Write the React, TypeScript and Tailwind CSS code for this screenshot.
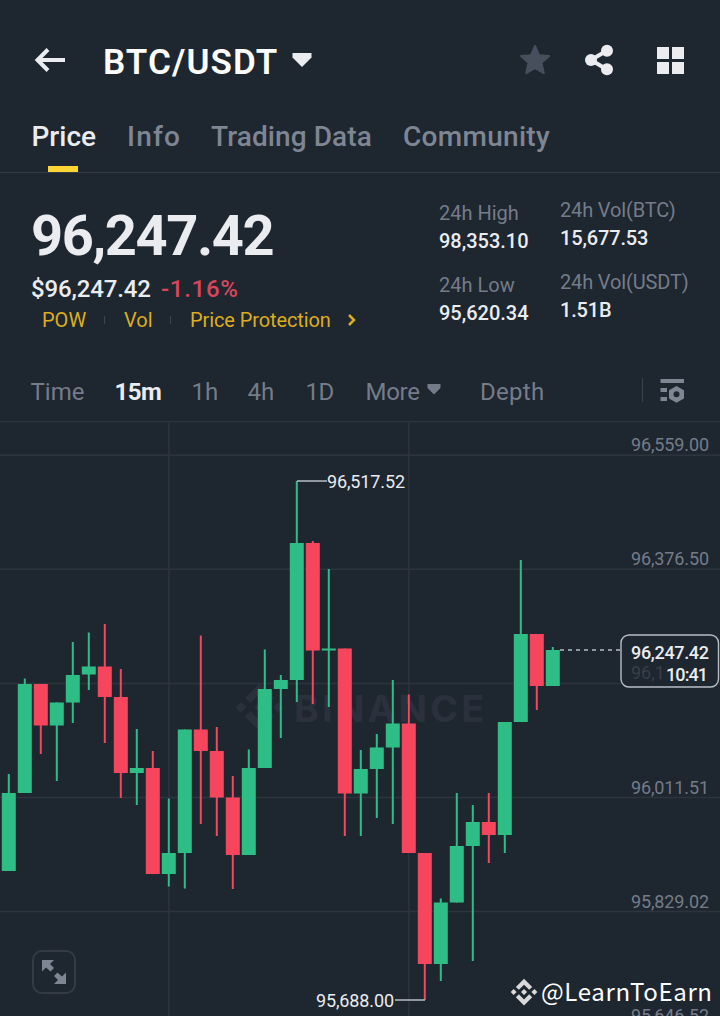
import React from 'react';

interface Candle {
  high: number;
  top: number;
  bottom: number;
  low: number;
  up: boolean;
}

// high, body top, body bottom, low, rising
const rows: [number, number, number, number, boolean][] = [
  [774, 793, 871, 871, true],
  [678.5, 684, 793, 793, true],
  [684, 684, 725.5, 754, false],
  [702.5, 702.5, 725.5, 781, true],
  [642, 675, 702.5, 723, true],
  [632.5, 666.5, 674.5, 690, true],
  [624, 666.5, 697, 743, false],
  [669, 697, 773, 798, false],
  [729, 768, 773, 805, true],
  [751, 768, 874, 874, false],
  [798.5, 853, 874, 886.5, true],
  [729.5, 729.5, 853, 888.5, true],
  [635.5, 729.5, 751, 824, false],
  [727, 751, 797.5, 836, false],
  [776, 797.5, 855, 889, false],
  [749.5, 768, 855, 855, true],
  [649.5, 689, 768, 768, true],
  [675, 680, 689, 738, true],
  [481, 543, 680, 702, true],
  [541, 543, 650.5, 704, false],
  [569, 648.5, 650.5, 707, true],
  [648.5, 648.5, 793.5, 836, false],
  [750, 769, 793.5, 836, true],
  [734, 747.5, 769, 818, true],
  [680, 723.5, 747.5, 824, true],
  [694.5, 723.5, 853, 853, false],
  [853, 853, 964, 1000, false],
  [898.5, 902.5, 964, 981, true],
  [793, 846, 902.5, 902.5, true],
  [805, 822, 846, 961, true],
  [793, 822, 835, 863, false],
  [722, 722, 835, 853, true],
  [560, 634, 722, 722, true],
  [634, 634, 686, 710, false],
  [647, 650, 686, 686, true],
];

const candles: Candle[] = rows.map(([high, top, bottom, low, up]) => ({ high, top, bottom, low, up }));

const axisLabels = [
  { y: 451, text: '96,559.00' },
  { y: 565, text: '96,376.50' },
  { y: 794, text: '96,011.51' },
  { y: 908, text: '95,829.02' },
  { y: 1022, text: '95,646.52' },
];

const tabs = [
  { label: 'Price', className: 'w-[95.5px] text-[#eaecef]' },
  { label: 'Info', className: 'w-[84px] text-[#7e8593] tracking-[1.2px]' },
  { label: 'Trading Data', className: 'w-[192px] text-[#7e8593] tracking-[0.1px]' },
  { label: 'Community', className: 'text-[#7e8593] tracking-[0.3px]' },
];

const intervals = [
  { label: 'Time', className: 'w-[84px]' },
  { label: '15m', className: 'w-[77px] font-bold tracking-[-0.5px] text-[#eaecef]' },
  { label: '1h', className: 'w-[56px]' },
  { label: '4h', className: 'w-[58px]' },
  { label: '1D', className: 'w-[60px] tracking-[-0.5px]' },
];

const stats = [
  {
    className: 'w-[121px] gap-[15px] pt-[26px]',
    items: [
      { label: '24h High', value: '98,353.10' },
      { label: '24h Low', value: '95,620.34' },
    ],
  },
  {
    className: 'gap-[15px] pt-[23px] tracking-[-0.15px]',
    items: [
      { label: '24h Vol(BTC)', value: '15,677.53' },
      { label: '24h Vol(USDT)', value: '1.51B' },
    ],
  },
];

function BinanceMark() {
  return (
    <>
      <path d="M7.6 10.1 12 5.7l4.4 4.4L19 7.6l-7-7-7 7z" />
      <path d="M.6 12l2.5-2.5L5.7 12l-2.6 2.5z" />
      <path d="M7.6 13.9 12 18.3l4.4-4.4 2.6 2.5-7 7-7-7z" />
      <path d="M18.3 12l2.6-2.5 2.5 2.5-2.5 2.5z" />
      <path d="M9.4 12 12 9.4l2.6 2.6-2.6 2.6z" />
    </>
  );
}

function Header() {
  return (
    <header className="flex h-[120px] items-center pl-[34px] pr-9">
      <svg width="32" height="26" viewBox="0 0 32 26" fill="none" stroke="#eaecef" strokeWidth="4">
        <path d="M4 13h27M14 2.5 3.5 13 14 23.5" />
      </svg>
      <h1 className="ml-[37px] w-[189px] whitespace-nowrap pt-[5px] text-[35px] font-semibold leading-none tracking-[1.1px] text-white">
        BTC/USDT
      </h1>
      <svg width="20" height="16" viewBox="0 0 20 16" fill="#eaecef">
        <path d="M.5 1h19v4.500L10 15 .5 5.500z" />
      </svg>
      <div className="ml-auto flex items-center">
        <svg width="32" height="32" viewBox="0 0 32 32" fill="#474f5c" stroke="#474f5c" strokeWidth="2" strokeLinejoin="round">
          <path d="M16 2l4.1 9.2 10 .9-7.600 6.700 2.300 10.200L16 24.200 7.200 29l2.300-10.200L2 12.100l10-.9z" />
        </svg>
        <svg width="32" height="32" viewBox="0 0 32 32" className="ml-8" fill="#eaecef" stroke="#eaecef">
          <path d="M8 16 24 6.500M8 16l16 9.500" strokeWidth="4" />
          <circle cx="8" cy="16" r="6" stroke="none" />
          <circle cx="24" cy="6.700" r="6" stroke="none" />
          <circle cx="24" cy="25.300" r="6" stroke="none" />
        </svg>
        <div className="ml-[42px] grid grid-cols-2 gap-[3px]">
          <i className="size-3 bg-[#eaecef]" />
          <i className="size-3 bg-[#eaecef]" />
          <i className="size-3 bg-[#eaecef]" />
          <i className="size-3 bg-[#eaecef]" />
        </div>
      </div>
    </header>
  );
}

function Tabs() {
  return (
    <nav className="flex h-[53px] border-b border-[#343b46] pl-[31.5px] text-[28px] font-medium leading-[33px]">
      {tabs.map((tab) => (
        <div key={tab.label} className={`flex flex-col justify-between whitespace-nowrap ${tab.className}`}>
          <span>{tab.label}</span>
          {tab.label === 'Price' && <span className="ml-4 h-1.5 w-[30px] bg-[#fcd535]" />}
        </div>
      ))}
    </nav>
  );
}

function Summary() {
  return (
    <section className="flex h-[189px] pl-[31px]">
      <div className="w-[408px] pt-[33px]">
        <div className="text-[56px] font-bold leading-[60px] tracking-[-1.4px] text-[#eaecef]">96,247.42</div>
        <div className="mt-2 flex text-2xl leading-[30px]">
          <span className="w-[130px] font-medium tracking-[-0.15px] text-[#eaecef]">$96,247.42</span>
          <span className="font-medium tracking-[0.7px] text-[#d4475c]">-1.16%</span>
        </div>
        <div className="ml-[11px] mt-1 flex items-center whitespace-nowrap text-[20px] leading-6 text-[#dcae1e]">
          <span className="w-[62px]">POW</span>
          <i className="h-2 w-px bg-[#3b424e]" />
          <span className="ml-[19px] w-[46px]">Vol</span>
          <i className="h-2 w-px bg-[#3b424e]" />
          <span className="ml-[19px] w-[157px] tracking-[-0.1px]">Price Protection</span>
          <svg width="10" height="12" viewBox="0 0 10 12" fill="none" stroke="#dcae1e" strokeWidth="2.500">
            <path d="M2 1l5 5-5 5" />
          </svg>
        </div>
      </div>
      {stats.map((column, i) => (
        <div key={i} className={`flex flex-col whitespace-nowrap text-[20px] ${column.className}`}>
          {column.items.map((item) => (
            <div key={item.label}>
              <div className="leading-7 text-[#757c89]">{item.label}</div>
              <div className="leading-[29px] font-medium text-[#eaecef]">{item.value}</div>
            </div>
          ))}
        </div>
      ))}
    </section>
  );
}

function Intervals() {
  return (
    <div className="flex h-[59px] items-center pl-[30.5px] text-2xl text-[#757c89]">
      {intervals.map((item) => (
        <span key={item.label} className={item.className}>
          {item.label}
        </span>
      ))}
      <span className="w-[61.5px] tracking-[-0.3px]">More</span>
      <svg width="14" height="11" viewBox="0 0 14 11" fill="#757c89" className="mb-1">
        <path d="M.5 0h13v4L7 10.500.5 4z" />
      </svg>
      <span className="ml-[39px] w-[162px] tracking-[0.3px]">Depth</span>
      <i className="mb-1 h-6 w-px bg-[#3b424e]" />
      <svg width="25" height="26" viewBox="0 0 25 26" fill="#7e8593" className="mb-px ml-[17px]">
        <path d="M.5 1h23.500v4H.5zM.5 10h6.500v4H.5zM.5 19h6.500v4H.5z" />
        <path fillRule="evenodd" d="M16.500 8l7.500 4.200v8.300l-7.500 4.200L9 20.500v-8.300zM16.500 13.300a3 3 0 1 0 0 6 3 3 0 0 0 0-6z" />
      </svg>
    </div>
  );
}

function Chart() {
  return (
    <svg width="720" height="595" viewBox="0 421 720 595" className="block">
      <g stroke="#2d343e" strokeWidth="1.5">
        <path d="M0 421.500h720M0 455.300h720M0 569.300h720M0 683.500h720M0 797.500h720M0 911.500h720" />
        <path d="M168.900 421v595M408.800 421v595" />
      </g>

      {/* Watermark */}
      <g fill="#2b313c">
        <g transform="translate(234.5 682) scale(2.1)">
          <BinanceMark />
        </g>
        <text x="294" y="721.5" fontSize="37.5" fontWeight="700" fontFamily="Inter, sans-serif" textLength="190">
          BINANCE
        </text>
      </g>

      {candles.map((candle, i) => {
        const x = 1.8 + i * 16;
        const color = candle.up ? '#2ebd85' : '#f6465d';
        return (
          <g key={i} fill={color}>
            <rect x={x + 6} y={candle.high} width="2" height={candle.low - candle.high} />
            <rect x={x} y={candle.top} width="14" height={candle.bottom - candle.top} />
          </g>
        );
      })}

      {/* High and low markers */}
      <path d="M297 481h30M395 1000h30" stroke="#b7bdc6" strokeWidth="1.5" />
      <g fill="#eaecef" fontSize="18">
        <text x="327" y="488" textLength="78">96,517.52</text>
        <text x="316" y="1007" textLength="78">95,688.00</text>
      </g>

      <g fill="#757c89" fontSize="18">
        {axisLabels.map((label) => (
          <text key={label.text} x="631" y={label.y} textLength="78">
            {label.text}
          </text>
        ))}
      </g>

      {/* Current price */}
      <path d="M560 650h61" stroke="#b7bdc6" strokeWidth="1.5" strokeDasharray="4 4" />
      <rect x="621" y="635" width="97.5" height="52" rx="8" fill="#1e2630" stroke="#b7bdc6" strokeWidth="1.4" />
      <text x="631" y="679" fontSize="18" fill="#373e49">96,1</text>
      <g fill="#eaecef" fontSize="18" fontWeight="500">
        <text x="631" y="659" textLength="78">96,247.42</text>
        <text x="666" y="681" textLength="42">10:41</text>
      </g>

      {/* Expand button */}
      <rect x="33" y="951" width="42" height="42" rx="9" fill="none" stroke="#343b46" strokeWidth="2" />
      <g fill="#7e8593">
        <path d="M42 960h12l-4 4 4 4-3.500 3.500-4.500-4-4 4z" />
        <path d="M66 984H54l4-4-4-4 3.500-3.500 4.500 4 4-4z" />
      </g>

      <g fill="#d9d9d9" transform="translate(510 978) scale(1.17)">
        <BinanceMark />
      </g>
      <text x="541" y="1001" fontSize="24" fill="#fff" fontFamily="'Noto Sans CJK SC', sans-serif" textLength="171">
        @LearnToEarn
      </text>
    </svg>
  );
}

export default function App() {
  return (
    <main className="h-[1016px] w-[720px] overflow-hidden bg-[#1e2630] font-[Roboto,sans-serif]">
      <Header />
      <Tabs />
      <Summary />
      <Intervals />
      <Chart />
    </main>
  );
}
